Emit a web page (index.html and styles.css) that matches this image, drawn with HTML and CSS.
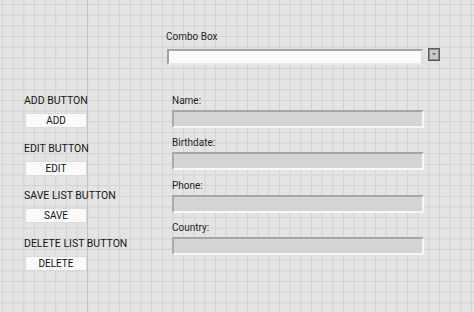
FILE: index.html
```html
<!DOCTYPE html>
<html lang="en">
<head>
<meta charset="UTF-8">
<title>Contact Panel</title>
<link rel="stylesheet" href="styles.css">
</head>
<body>

<div class="panel">
  <div class="buttons">
    <div class="group">
      <div class="btn-label">ADD BUTTON</div>
      <button class="btn">ADD</button>
    </div>
    <div class="group">
      <div class="btn-label">EDIT BUTTON</div>
      <button class="btn">EDIT</button>
    </div>
    <div class="group">
      <div class="btn-label">SAVE LIST BUTTON</div>
      <button class="btn">SAVE</button>
    </div>
    <div class="group">
      <div class="btn-label">DELETE LIST BUTTON</div>
      <button class="btn">DELETE</button>
    </div>
  </div>

  <div class="form">
    <div class="combo">
      <div class="field-label">Combo Box</div>
      <div class="combo-row">
        <div class="combo-input"></div>
        <div class="combo-arrow">
          <svg width="12" height="13" viewBox="0 0 12 13">
            <rect x="0.5" y="0.5" width="11" height="12" fill="#b9b9b9" stroke="#5a5a5a"/>
            <rect x="1.5" y="1.5" width="9" height="10" fill="#c9c9c9" stroke="#8c8c8c"/>
            <path d="M4 5 L8 5 L6 7.5 Z" fill="#6a6a6a"/>
          </svg>
        </div>
      </div>
    </div>

    <div class="fields">
      <div class="field">
        <div class="field-label">Name:</div>
        <div class="field-box"></div>
      </div>
      <div class="field">
        <div class="field-label">Birthdate:</div>
        <div class="field-box"></div>
      </div>
      <div class="field">
        <div class="field-label">Phone:</div>
        <div class="field-box"></div>
      </div>
      <div class="field">
        <div class="field-label">Country:</div>
        <div class="field-box"></div>
      </div>
    </div>
  </div>
</div>

</body>
</html>
```

FILE: styles.css
```css
* {
  margin: 0;
  padding: 0;
  box-sizing: border-box;
  font-family: 'Roboto', 'Liberation Sans', sans-serif;
}

body {
  width: 474px;
  height: 312px;
  overflow: hidden;
  color: #1a1a1a;
  background-color: #e4e4e4;
  background-image:
    linear-gradient(to right, #c2c2c2 1px, transparent 1px),
    linear-gradient(to right, #d2d2d2 1px, transparent 1px),
    linear-gradient(to bottom, #d2d2d2 1px, transparent 1px);
  background-size: 1px 100%, 10.67px 10.67px, 10.67px 10.67px;
  background-position: 87px 0, 2px 4px, 2px 4px;
  background-repeat: repeat-y, repeat, repeat;
}

.panel {
  display: flex;
  padding: 31px 0 0 24px;
}

/* left column */
.buttons {
  width: 142px;
  margin-top: 64px;
  display: flex;
  flex-direction: column;
  gap: 14.5px;
}

.group {
  display: flex;
  flex-direction: column;
  gap: 6px;
}

.btn-label {
  font-size: 10.5px;
  line-height: 12px;
  color: #161616;
  white-space: nowrap;
}

.btn {
  width: 62px;
  height: 15px;
  margin-left: 1px;
  background: #fafafa;
  border: 1px solid #dcdcdc;
  border-radius: 2px;
  font-size: 10px;
  color: #111;
  line-height: 13px;
}

/* right column */
.form {
  display: flex;
  flex-direction: column;
}

.field-label {
  font-size: 10px;
  line-height: 12px;
  color: #1e1e1e;
}

.combo-row {
  display: flex;
  gap: 5px;
  margin-top: 6px;
}

.combo-input {
  width: 256px;
  height: 16px;
  margin-left: 1px;
  background: #fbfbfb;
  border: 2px solid;
  border-color: #a4a4a4 #dedede #e8e8e8 #a4a4a4;
}

.combo-arrow {
  margin-top: -1px;
  line-height: 0;
}

.fields {
  margin: 30px 0 0 6px;
  display: flex;
  flex-direction: column;
  gap: 9.3px;
}

.field {
  display: flex;
  flex-direction: column;
  gap: 3px;
}

.field-box {
  width: 252px;
  height: 18px;
  background: #d4d4d4;
  border: 2px solid;
  border-color: #a6a6a6 #f6f6f6 #f6f6f6 #ababab;
}
```
